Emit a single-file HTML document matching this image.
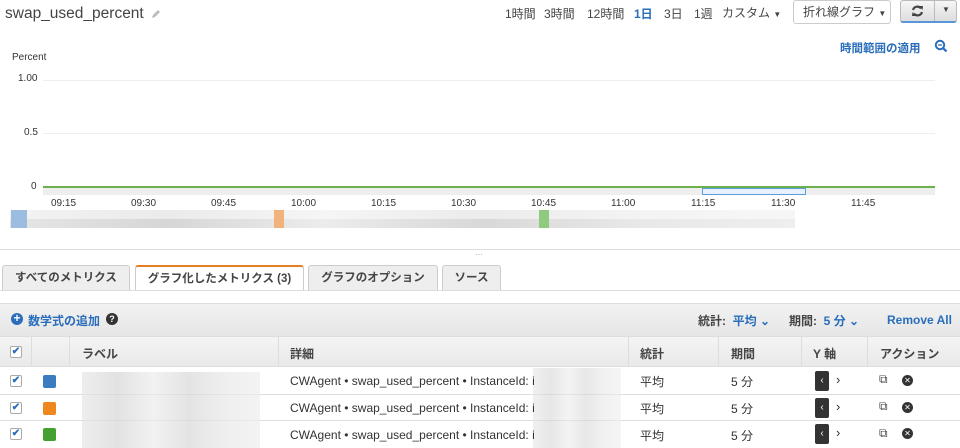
<!DOCTYPE html>
<html><head><meta charset="utf-8"><style>
*{box-sizing:border-box;margin:0;padding:0}
body{width:960px;height:448px;overflow:hidden;background:#fff;font-family:"Liberation Sans","Noto Sans CJK JP",sans-serif;color:#333;position:relative}
.a{position:absolute;white-space:nowrap}
.blue{color:#2a6ebb}
.tl{font-size:12px;color:#444}
.grid{position:absolute;left:43px;width:892px;height:1px;background:#eee}
.tab{position:absolute;top:265px;height:25px;border:1px solid #ccc;border-bottom:none;background:#eee;font-size:11.5px;font-weight:bold;color:#444;text-align:center;line-height:24px;border-radius:3px 3px 0 0}
.cb{position:absolute;width:12px;height:12px;border:1px solid #aaa;border-radius:2px;background:#fff;font-size:10px;line-height:10px;text-align:center;color:#2a6ebb;font-weight:bold}
.row{position:absolute;left:0;width:960px;border-bottom:1px solid #ddd;font-size:12px}
.vl{position:absolute;top:337px;height:30px;width:1px;background:#ddd}
.blur{position:absolute;background:linear-gradient(90deg,#e6e6e6,#d6d6d6 20%,#ececec 40%,#d8d8d8 60%,#e8e8e8 80%,#eee)}
</style></head><body>
<div class="a" style="left:5px;top:5px;font-size:15.5px;color:#444">swap_used_percent</div>
<svg class="a" style="left:151px;top:9px" width="10" height="10"><path d="M1 9 L2 6 L7 1 L9 3 L4 8 Z" fill="#bbb"/></svg>
<div class="a tl" style="left:505px;top:5px">1時間</div>
<div class="a tl" style="left:544px;top:5px">3時間</div>
<div class="a tl" style="left:587px;top:5px">12時間</div>
<div class="a" style="left:634px;top:5px;font-size:12px;font-weight:bold;color:#2a6ebb">1日</div>
<div class="a tl" style="left:664px;top:5px">3日</div>
<div class="a tl" style="left:694px;top:5px">1週</div>
<div class="a tl" style="left:722px;top:4px">カスタム <span style="font-size:8px">▼</span></div>
<div class="a" style="left:793px;top:0;width:98px;height:24px;border:1px solid #ccc;border-radius:3px;font-size:12px;color:#444;line-height:22px;padding-left:9px">折れ線グラフ <span style="font-size:8px">▼</span></div>
<div class="a" style="left:900px;top:0;width:57px;height:23px;border:1px solid #bbb;border-radius:3px;background:linear-gradient(#f6f6f6,#ddd);border-bottom:2px solid #5a95d8"></div>
<div class="a" style="left:934px;top:0;width:1px;height:21px;background:#bbb"></div>
<svg class="a" style="left:911px;top:5px" width="13" height="12"><path d="M2 5 A4.5 4.5 0 0 1 10 3.5" stroke="#444" stroke-width="2.2" fill="none"/><path d="M8 1 L12 1 L11.5 5 Z" fill="#444"/><path d="M11 7 A4.5 4.5 0 0 1 3 8.5" stroke="#444" stroke-width="2.2" fill="none"/><path d="M5 11 L1 11 L1.5 7 Z" fill="#444"/></svg>
<div class="a" style="left:942px;top:5px;font-size:8px;color:#444">▼</div>
<div class="a" style="left:840px;top:40px;font-size:11.5px;font-weight:bold;color:#2a6ebb">時間範囲の適用</div>
<svg class="a" style="left:934px;top:39px" width="14" height="14"><circle cx="6" cy="6" r="4.2" stroke="#2a6ebb" stroke-width="2" fill="none"/><line x1="9" y1="9" x2="12.5" y2="12.5" stroke="#2a6ebb" stroke-width="2.2"/><line x1="4" y1="6" x2="8" y2="6" stroke="#2a6ebb" stroke-width="1.3"/></svg>
<div class="a" style="left:12px;top:52px;font-size:10px;color:#333">Percent</div>
<div class="a" style="left:18px;top:73px;font-size:10px">1.00</div>
<div class="a" style="left:24px;top:127px;font-size:10px">0.5</div>
<div class="a" style="left:31px;top:181px;font-size:10px">0</div>
<div class="grid" style="top:80px"></div>
<div class="grid" style="top:133px"></div>
<div class="a" style="left:43px;top:186px;width:892px;height:2px;background:#6ab04c"></div>
<div class="a" style="left:43px;top:188px;width:892px;height:7px;background:#eee"></div>
<div class="a" style="left:702px;top:188px;width:104px;height:7px;border:1px solid #5a9ee0;background:#e8f1fb"></div>
<div class="a" style="left:50px;top:198px;font-size:10px;width:900px">
<span class="a" style="left:1px">09:15</span><span class="a" style="left:81px">09:30</span><span class="a" style="left:161px">09:45</span><span class="a" style="left:241px">10:00</span><span class="a" style="left:321px">10:15</span><span class="a" style="left:401px">10:30</span><span class="a" style="left:481px">10:45</span><span class="a" style="left:561px">11:00</span><span class="a" style="left:641px">11:15</span><span class="a" style="left:721px">11:30</span><span class="a" style="left:801px">11:45</span></div>
<div class="blur" style="left:10px;top:210px;width:785px;height:9px;opacity:.5"></div>
<div class="blur" style="left:10px;top:219px;width:785px;height:9px"></div>
<div class="a" style="left:11px;top:210px;width:16px;height:18px;background:#9dbde0"></div>
<div class="a" style="left:274px;top:210px;width:10px;height:18px;background:#f2b27c"></div>
<div class="a" style="left:539px;top:210px;width:10px;height:18px;background:#8fca7f"></div>
<div class="a" style="left:0;top:249px;width:960px;height:1px;background:#ddd"></div>
<div class="a" style="left:475px;top:250px;font-size:8px;color:#999">···</div>
<div class="tab" style="left:2px;width:128px">すべてのメトリクス</div>
<div class="tab" style="left:135px;width:169px;background:#fff;border-top:2px solid #e67e22;height:26px">グラフ化したメトリクス (3)</div>
<div class="tab" style="left:308px;width:130px">グラフのオプション</div>
<div class="tab" style="left:442px;width:59px">ソース</div>
<div class="a" style="left:0;top:290px;width:960px;height:158px;border-top:1px solid #ddd"></div>
<div class="a" style="left:0;top:303px;width:960px;height:34px;background:linear-gradient(#f2f2f2,#e6e6e6);border-top:1px solid #ddd;border-bottom:1px solid #ddd"></div>
<div class="a" style="left:11px;top:313px;width:12px;height:12px;border-radius:50%;background:#2a6ebb;color:#fff;font-size:12px;line-height:11px;text-align:center;font-weight:bold">+</div>
<div class="a blue" style="left:28px;top:312px;font-size:12px;font-weight:bold">数学式の追加</div>
<div class="a" style="left:106px;top:313px;width:12px;height:12px;border-radius:50%;background:#333;color:#fff;font-size:9px;line-height:12px;text-align:center;font-weight:bold">?</div>
<div class="a" style="left:698px;top:312px;font-size:12px;font-weight:bold;color:#444">統計: <span class="blue">&nbsp;平均 ⌄</span></div>
<div class="a" style="left:789px;top:312px;font-size:12px;font-weight:bold;color:#444">期間: <span class="blue">&nbsp;5 分 ⌄</span></div>
<div class="a blue" style="left:887px;top:313px;font-size:12px;font-weight:bold">Remove All</div>
<div class="row" style="top:337px;height:30px;background:linear-gradient(#f4f4f4,#e9e9e9);font-weight:bold;color:#444">
<span class="a" style="left:82px;top:8px">ラベル</span><span class="a" style="left:290px;top:8px">詳細</span><span class="a" style="left:640px;top:8px">統計</span><span class="a" style="left:731px;top:8px">期間</span><span class="a" style="left:813px;top:8px">Y 軸</span><span class="a" style="left:880px;top:8px">アクション</span></div>
<div class="vl" style="left:31px"></div><div class="vl" style="left:69px"></div><div class="vl" style="left:278px"></div><div class="vl" style="left:628px"></div><div class="vl" style="left:718px"></div><div class="vl" style="left:801px"></div><div class="vl" style="left:867px"></div>
<div class="cb" style="left:10px;top:346px">✔</div>
<div class="row" style="top:367px;height:28px"></div>
<div class="row" style="top:395px;height:26px"></div>
<div class="row" style="top:421px;height:27px;border:none"></div>
<div class="blur" style="left:82px;top:372px;width:178px;height:76px;opacity:.7"></div>
<div class="blur" style="left:533px;top:368px;width:88px;height:80px;opacity:.6"></div>
<div class="cb" style="left:10px;top:375px">✔</div><div class="cb" style="left:10px;top:402px">✔</div><div class="cb" style="left:10px;top:428px">✔</div>
<div class="a" style="left:43px;top:375px;width:13px;height:13px;border-radius:2px;background:#3b7bbf"></div>
<div class="a" style="left:43px;top:402px;width:13px;height:13px;border-radius:2px;background:#f0861e"></div>
<div class="a" style="left:43px;top:428px;width:13px;height:13px;border-radius:2px;background:#44a02f"></div>
<div class="a" style="left:290px;top:374px;font-size:12px">CWAgent • swap_used_percent • InstanceId: i</div>
<div class="a" style="left:290px;top:401px;font-size:12px">CWAgent • swap_used_percent • InstanceId: i</div>
<div class="a" style="left:290px;top:428px;font-size:12px">CWAgent • swap_used_percent • InstanceId: i</div>
<div class="a" style="left:640px;top:373px;font-size:12px">平均</div><div class="a" style="left:640px;top:400px;font-size:12px">平均</div><div class="a" style="left:640px;top:427px;font-size:12px">平均</div>
<div class="a" style="left:731px;top:373px;font-size:12px">5 分</div><div class="a" style="left:731px;top:400px;font-size:12px">5 分</div><div class="a" style="left:731px;top:427px;font-size:12px">5 分</div>
<div class="a" style="left:815px;top:371px;width:14px;height:20px;background:#333;border-radius:2px;color:#fff;font-size:10px;text-align:center;line-height:20px">‹</div>
<div class="a" style="left:815px;top:398px;width:14px;height:20px;background:#333;border-radius:2px;color:#fff;font-size:10px;text-align:center;line-height:20px">‹</div>
<div class="a" style="left:815px;top:424px;width:14px;height:20px;background:#333;border-radius:2px;color:#fff;font-size:10px;text-align:center;line-height:20px">‹</div>
<div class="a" style="left:836px;top:372px;font-size:13px">›</div><div class="a" style="left:836px;top:399px;font-size:13px">›</div><div class="a" style="left:836px;top:425px;font-size:13px">›</div>
<div class="a" style="left:879px;top:372px;font-size:12px;color:#444">⧉</div><div class="a" style="left:879px;top:399px;font-size:12px;color:#444">⧉</div><div class="a" style="left:879px;top:426px;font-size:12px;color:#444">⧉</div>
<div class="a" style="left:902px;top:375px;width:11px;height:11px;border-radius:50%;background:#333;color:#fff;font-size:8px;line-height:11px;text-align:center">✕</div>
<div class="a" style="left:902px;top:402px;width:11px;height:11px;border-radius:50%;background:#333;color:#fff;font-size:8px;line-height:11px;text-align:center">✕</div>
<div class="a" style="left:902px;top:428px;width:11px;height:11px;border-radius:50%;background:#333;color:#fff;font-size:8px;line-height:11px;text-align:center">✕</div>
</body></html>
